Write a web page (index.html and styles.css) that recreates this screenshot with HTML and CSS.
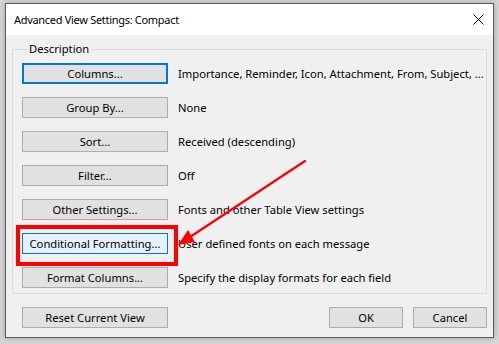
FILE: index.html
```html
<!DOCTYPE html>
<html lang="en">
<head>
    <meta charset="UTF-8">
    <title>Advanced View Settings: Compact</title>
    <link rel="stylesheet" href="styles.css">
</head>
<body>
    <div class="desk">
        <div class="dialog">
            <div class="titlebar">
                <span class="title">Advanced View Settings: Compact</span>
                <svg class="close" width="11" height="11" viewBox="0 0 11 11">
                    <line x1="0.5" y1="0.5" x2="10.5" y2="10.5" stroke="#000" stroke-width="1"></line>
                    <line x1="10.5" y1="0.5" x2="0.5" y2="10.5" stroke="#000" stroke-width="1"></line>
                </svg>
            </div>
            <div class="content">
                <fieldset class="group">
                    <legend>Description</legend>
                    <div class="rows">
                        <div class="row"><button class="btn focused">Columns...</button><span class="desc">Importance, Reminder, Icon, Attachment, From, Subject, ...</span></div>
                        <div class="row"><button class="btn">Group By...</button><span class="desc">None</span></div>
                        <div class="row"><button class="btn">Sort...</button><span class="desc">Received (descending)</span></div>
                        <div class="row"><button class="btn">Filter...</button><span class="desc">Off</span></div>
                        <div class="row"><button class="btn">Other Settings...</button><span class="desc">Fonts and other Table View settings</span></div>
                        <div class="row"><button class="btn hovered">Conditional Formatting...</button><span class="desc">User defined fonts on each message</span></div>
                        <div class="row"><button class="btn">Format Columns...</button><span class="desc">Specify the display formats for each field</span></div>
                    </div>
                </fieldset>
                <div class="footer">
                    <button class="btn">Reset Current View</button>
                    <div class="spacer"></div>
                    <button class="btn small">OK</button>
                    <button class="btn small">Cancel</button>
                </div>
            </div>
        </div>
        <div class="highlight"></div>
        <svg class="arrow" width="499" height="344" viewBox="0 0 499 344">
            <line x1="305" y1="161" x2="190" y2="237" stroke="#f00" stroke-width="2.2" stroke-linecap="round"></line>
            <polygon points="178,245 195,242 188,230" fill="#f00"></polygon>
        </svg>
    </div>
</body>
</html>
```

FILE: styles.css
```css
body, html {
    margin: 0;
    padding: 0;
    height: 100%;
    overflow: hidden;
    font-family: "Noto Sans", "Liberation Sans", sans-serif;
    font-size: 11.2px;
    color: #000;
}
.desk {
    position: relative;
    height: 344px;
    background-color: #d6d6d6;
    padding: 3px 0 0 5px;
    box-sizing: border-box;
}
.dialog {
    width: 489px;
    height: 335px;
    box-sizing: border-box;
    border: 1px solid #5a5a5a;
    background-color: #f0f0f0;
    display: flex;
    flex-direction: column;
    box-shadow: 0 0 6px rgba(0, 0, 0, 0.25);
}
.titlebar {
    height: 31px;
    background-color: #fff;
    display: flex;
    align-items: center;
    justify-content: space-between;
    padding: 0 9px 0 8px;
    font-size: 11px;
    letter-spacing: -0.3px;
}
.close {
    display: block;
}
.content {
    flex: 1;
    padding: 6px 6px 8px 6px;
    display: flex;
    flex-direction: column;
}
.group {
    margin: 0;
    padding: 6px 9px 5px 9px;
    border: 1px solid #dcdcdc;
    min-width: 0;
}
.group legend {
    padding: 0 2px;
    margin-left: 5px;
    line-height: 16px;
}
.rows {
    display: flex;
    flex-direction: column;
    gap: 13px;
}
.row {
    display: flex;
    align-items: center;
    gap: 10px;
    height: 21px;
}
.desc {
    white-space: nowrap;
}
.btn {
    width: 146px;
    height: 21px;
    box-sizing: border-box;
    border: 1px solid #adadad;
    background-color: #e1e1e1;
    font-family: inherit;
    font-size: 11.2px;
    color: #000;
    padding: 0;
    flex-shrink: 0;
}
.btn.focused {
    border: 2px solid #0078d7;
}
.btn.hovered {
    border-color: #0078d7;
    background-color: #e5f1fb;
}
.btn.small {
    width: 74px;
}
.footer {
    margin-top: 13px;
    display: flex;
    gap: 10px;
    padding-left: 10px;
}
.spacer {
    flex: 1;
}
.highlight {
    position: absolute;
    left: 16px;
    top: 225px;
    width: 162px;
    height: 41px;
    box-sizing: border-box;
    border: 4px solid #f00;
}
.arrow {
    position: absolute;
    left: 0;
    top: 0;
    pointer-events: none;
}
```
